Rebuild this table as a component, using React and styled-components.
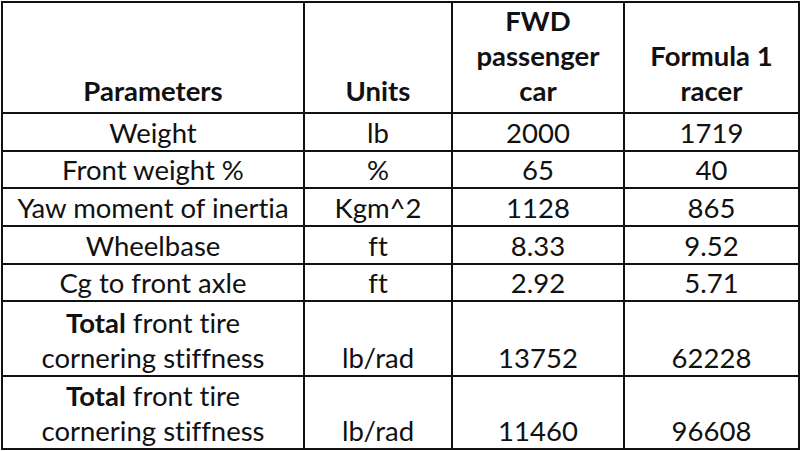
import React from "react";
import styled, { createGlobalStyle } from "styled-components";

const GlobalStyle = createGlobalStyle`
  html, body {
    margin: 0;
    padding: 0;
    background: #ffffff;
  }
  body {
    font-family: Lato, "Open Sans", "Liberation Sans", sans-serif;
    color: #111111;
    font-variant-ligatures: none;
  }
`;

const Page = styled.div`
  width: 800px;
  height: 451px;
  padding: 1px 0 0 1px;
  box-sizing: border-box;
  background: #ffffff;
  overflow: hidden;
`;

const Table = styled.table`
  width: 797px;
  border-collapse: collapse;
  table-layout: fixed;
  font-size: 27.5px;
  line-height: 35px;
`;

const Row = styled.tr`
  height: ${(p) => p.$h}px;
`;

const Cell = styled.td`
  border: 2px solid #111111;
  padding: 0 2px ${(p) => p.$pb || 0}px;
  text-align: center;
  vertical-align: bottom;
  white-space: nowrap;
  font-weight: ${(p) => (p.$bold ? 700 : 400)};
`;

const Strong = styled.b`
  font-weight: 700;
`;

const columns = [302, 148, 172, 175];

const rows = [
  ["Weight", "lb", "2000", "1719"],
  ["Front weight %", "%", "65", "40"],
  ["Yaw moment of inertia", "Kgm^2", "1128", "865"],
  ["Wheelbase", "ft", "8.33", "9.52"],
  ["Cg to front axle", "ft", "2.92", "5.71"],
];

const stiffness = [
  ["lb/rad", "13752", "62228"],
  ["lb/rad", "11460", "96608"],
];

export default function App() {
  return (
    <>
      <GlobalStyle />
      <Page>
        <Table>
          <colgroup>
            {columns.map((w, i) => (
              <col key={i} style={{ width: w }} />
            ))}
          </colgroup>
          <tbody>
            <Row $h={110}>
              <Cell $bold $pb={4}>Parameters</Cell>
              <Cell $bold $pb={4}>Units</Cell>
              <Cell $bold $pb={4}>
                FWD
                <br />
                passenger
                <br />
                car
              </Cell>
              <Cell $bold $pb={4}>
                Formula 1
                <br />
                racer
              </Cell>
            </Row>
            {rows.map((r) => (
              <Row $h={37.7} key={r[0]}>
                {r.map((v, i) => (
                  <Cell key={i}>{v}</Cell>
                ))}
              </Row>
            ))}
            {stiffness.map((r, idx) => (
              <Row $h={idx === 0 ? 75 : 73} key={idx}>
                <Cell>
                  <Strong>Total</Strong> front tire
                  <br />
                  cornering stiffness
                </Cell>
                {r.map((v, i) => (
                  <Cell key={i}>{v}</Cell>
                ))}
              </Row>
            ))}
          </tbody>
        </Table>
      </Page>
    </>
  );
}
